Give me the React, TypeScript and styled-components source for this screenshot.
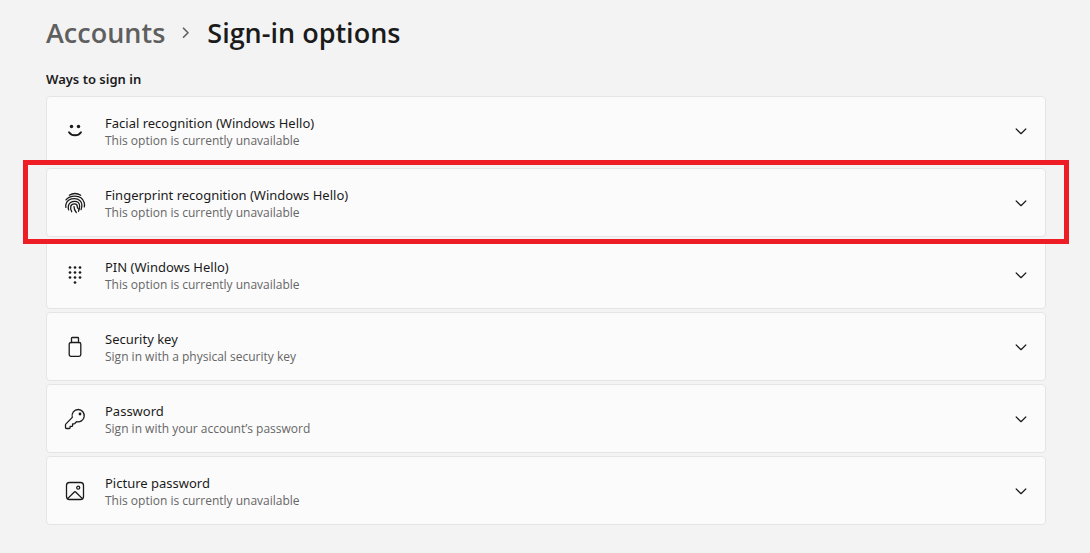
import React from "react";
import styled, { createGlobalStyle } from "styled-components";

const GlobalStyle = createGlobalStyle`
  *, *::before, *::after { box-sizing: border-box; }
  body {
    margin: 0;
    background: #f3f3f3;
    color: #1b1b1b;
    font-family: "Segoe UI", "Noto Sans", "Open Sans", sans-serif;
  }
`;

const Page = styled.main`
  padding: 13px 44px 28px 46px;
`;

const Breadcrumb = styled.nav`
  display: flex;
  align-items: center;
  gap: 16px;
  height: 40px;
  font-family: "Segoe UI", "Open Sans", sans-serif;
`;

const ParentLink = styled.a`
  color: #5f5f5f;
  font-size: 27px;
  line-height: 40px;
  font-weight: 600;
  text-decoration: none;
`;

const PageTitle = styled.h1`
  margin: 0;
  font-size: 27px;
  line-height: 40px;
  font-weight: 600;
`;

const SectionTitle = styled.h2`
  margin: 16px 0 7px;
  font-size: 13px;
  line-height: 20px;
  font-weight: 600;
`;

const OptionList = styled.ul`
  display: flex;
  flex-direction: column;
  gap: 3px;
  margin: 0;
  padding: 0;
  list-style: none;
`;

const OptionItem = styled.li`
  position: relative;
`;

const HighlightFrame = styled.span`
  position: absolute;
  z-index: 1;
  inset: -8px -23px -7px;
  border: 5px solid #ee1c25;
  pointer-events: none;
`;

const OptionButton = styled.button`
  display: flex;
  align-items: center;
  gap: 18px;
  width: 100%;
  height: 69px;
  padding: 0 17px 0 16px;
  border: 1px solid #e5e5e5;
  border-radius: 4px;
  background: #fbfbfb;
  color: inherit;
  font: inherit;
  text-align: left;
`;

const OptionText = styled.span`
  display: flex;
  flex: 1;
  flex-direction: column;
  min-width: 0;
  padding-top: 2px;
`;

const OptionName = styled.span`
  font-size: 13px;
  line-height: 19px;
`;

const OptionNote = styled.span`
  color: #666;
  font-family: "Segoe UI", "Open Sans", sans-serif;
  font-size: 12px;
  line-height: 16px;
`;

const Icon = styled.svg`
  flex: none;
  display: block;
  fill: none;
  stroke: #1b1b1b;
  stroke-linecap: round;
  stroke-linejoin: round;
`;

const Face = () => (
  <Icon width="24" height="24" viewBox="0 0 24 24" strokeWidth="1.9" aria-hidden>
    <circle cx="8.5" cy="7.6" r="1.75" fill="#1b1b1b" stroke="none" />
    <circle cx="15.5" cy="7.6" r="1.75" fill="#1b1b1b" stroke="none" />
    <path d="M6 13.2c1.3 2 3.4 3.1 6 3.1s4.700-1.100 6-3.100" />
  </Icon>
);

const Fingerprint = () => (
  <Icon width="24" height="24" viewBox="0 0 24 24" strokeWidth="1.3" aria-hidden>
    <path d="M6.300 4.200C8 3.100 9.900 2.500 12 2.500s4 .6 5.700 1.700" />
    <path d="M3 8.900c1.800-2.400 5-3.800 9-3.800 4.500 0 8.100 2.700 9.200 6.500.4 1.400.4 2.900.1 4.300" />
    <path d="M2.900 16.300c-.2-1-.2-2.200.1-3.200.9-3.200 4.500-5.400 8.700-5.400 4 0 7.200 2.600 7.200 6.300 0 1.600-.3 3.200-.8 4.600" />
    <path d="M5.600 18.800c-.4-1.500-.4-3.100-.1-4.300.6-2.400 3.100-4.200 6.200-4.200 2.800 0 4.900 1.900 4.900 4.600 0 1.900-.4 3.700-1.100 5.400" />
    <path d="M8.700 20.700c-1-2-1.300-3.900-.9-5.500.4-1.400 1.900-2.400 3.700-2.400 1.500 0 2.700 1 2.700 2.500 0 1.100.4 2 1.300 2.800" />
    <path d="M13.300 21.500c-1.500-1.600-2.300-3.500-2.300-5.900" />
  </Icon>
);

const KEYPAD_DOTS = [
  [7, 6], [12, 6], [17, 6],
  [7, 11], [12, 11], [17, 11],
  [7, 16], [12, 16], [17, 16],
  [12, 21],
];

const Keypad = () => (
  <Icon width="24" height="24" viewBox="0 0 24 24" aria-hidden>
    {KEYPAD_DOTS.map(([x, y]) => (
      <circle key={`${x}-${y}`} cx={x} cy={y - 1.5} r="1.35" fill="#1b1b1b" stroke="none" />
    ))}
  </Icon>
);

const SecurityKey = () => (
  <Icon width="24" height="24" viewBox="0 0 24 24" strokeWidth="1.3" aria-hidden>
    <path d="M8.500 7.500V3.200c0-.4.300-.7.700-.7h5.600c.4 0 .7.300.7.700v4.300" />
    <rect x="6.2" y="7.5" width="11.6" height="13.8" rx="1.7" />
  </Icon>
);

const Key = () => (
  <Icon width="24" height="24" viewBox="0 0 24 24" strokeWidth="1.3" aria-hidden>
    <path d="M15.300 2.500a6.200 6.200 0 0 0-6 7.900L3 16.900c-.3.300-.5.700-.5 1.200v2.500c0 .6.400.9.900.9h2.800c.6 0 .9-.4.900-.9v-1.300h1.600c.5 0 .9-.4.900-.9v-1.600h1.500c.3 0 .5-.1.700-.3l1.700-1.800a6.200 6.200 0 1 0 1.800-12.200Z" />
    <circle cx="17" cy="7" r="1.4" fill="#1b1b1b" stroke="none" />
  </Icon>
);

const Picture = () => (
  <Icon width="24" height="24" viewBox="0 0 24 24" strokeWidth="1.3" aria-hidden>
    <rect x="3.5" y="3.5" width="17" height="17" rx="3" />
    <circle cx="15.2" cy="8.7" r="1.5" />
    <path d="m4.600 19.600 6.500-6.400c.5-.5 1.300-.5 1.800 0l6.500 6.400" />
  </Icon>
);

const ChevronDown = () => (
  <Icon width="14" height="14" viewBox="0 0 14 14" strokeWidth="1.2" aria-hidden>
    <path d="m2.200 5 4.800 4.700L11.800 5" />
  </Icon>
);

const ChevronRight = () => (
  <Icon width="10" height="14" viewBox="0 0 10 14" strokeWidth="1.6" aria-hidden>
    <path d="m2.500 2.200 4.500 4.500-4.500 4.500" stroke="#5f5f5f" />
  </Icon>
);

const UNAVAILABLE = "This option is currently unavailable";

const OPTIONS = [
  { name: "Facial recognition (Windows Hello)", note: UNAVAILABLE, Glyph: Face },
  { name: "Fingerprint recognition (Windows Hello)", note: UNAVAILABLE, Glyph: Fingerprint, highlighted: true },
  { name: "PIN (Windows Hello)", note: UNAVAILABLE, Glyph: Keypad },
  { name: "Security key", note: "Sign in with a physical security key", Glyph: SecurityKey },
  { name: "Password", note: "Sign in with your account’s password", Glyph: Key },
  { name: "Picture password", note: UNAVAILABLE, Glyph: Picture },
];

export default function App() {
  return (
    <>
      <GlobalStyle />
      <Page>
        <Breadcrumb aria-label="Breadcrumb">
          <ParentLink href="#accounts">Accounts</ParentLink>
          <ChevronRight />
          <PageTitle>Sign-in options</PageTitle>
        </Breadcrumb>
        <SectionTitle>Ways to sign in</SectionTitle>
        <OptionList>
          {OPTIONS.map(({ name, note, Glyph, highlighted }) => (
            <OptionItem key={name}>
              <OptionButton type="button" aria-expanded={false}>
                <Glyph />
                <OptionText>
                  <OptionName>{name}</OptionName>
                  <OptionNote>{note}</OptionNote>
                </OptionText>
                <ChevronDown />
              </OptionButton>
              {highlighted && <HighlightFrame />}
            </OptionItem>
          ))}
        </OptionList>
      </Page>
    </>
  );
}
